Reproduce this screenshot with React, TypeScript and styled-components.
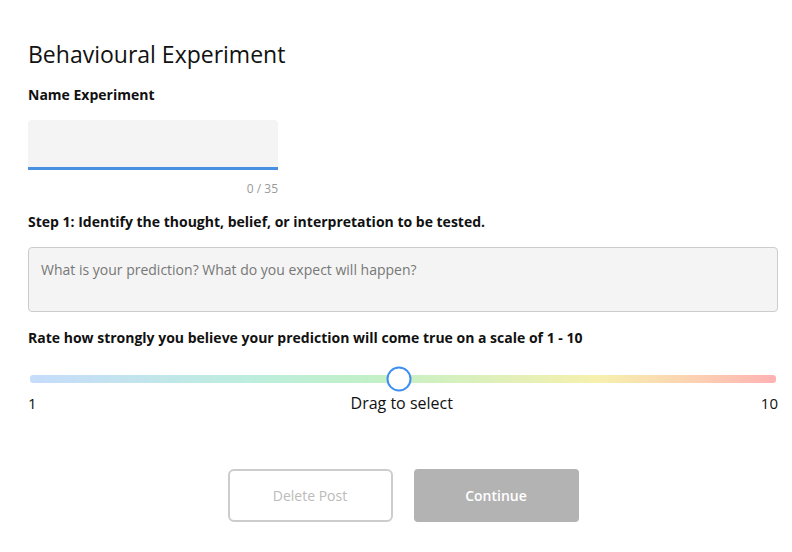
import React, { useState } from "react";
import styled, { createGlobalStyle } from "styled-components";

const GlobalStyle = createGlobalStyle`
    html, body {
        margin: 0;
        padding: 0;
        background: #ffffff;
    }
    body {
        font-family: "Open Sans", "Liberation Sans", sans-serif;
        color: #111111;
    }
    * {
        box-sizing: border-box;
    }
`;

function App() {
    const [name, setName] = useState("");
    const [percent] = useState(49.5);

    return (
        <>
            <GlobalStyle />
            <Page>
                <Title>Behavioural Experiment</Title>

                <Label>Name Experiment</Label>
                <NameField>
                    <NameInput value={name} maxLength={35} onChange={(e) => setName(e.target.value)} />
                    <Counter>{name.length} / 35</Counter>
                </NameField>

                <Label>Step 1: Identify the thought, belief, or interpretation to be tested.</Label>
                <Prediction placeholder="What is your prediction? What do you expect will happen?" />

                <Label>Rate how strongly you believe your prediction will come true on a scale of 1 - 10</Label>
                <Slider>
                    <Track>
                        <Thumb style={{ left: `${percent}%` }} />
                    </Track>
                </Slider>
                <Scale>
                    <span>1</span>
                    <Hint>Drag to select</Hint>
                    <span>10</span>
                </Scale>

                <Actions>
                    <GhostButton>Delete Post</GhostButton>
                    <SolidButton>Continue</SolidButton>
                </Actions>
            </Page>
        </>
    );
}

export default App;

const Page = styled.div`
    width: 750px;
    margin-left: 28px;
    padding-top: 38px;
    display: flex;
    flex-direction: column;
`;

const Title = styled.h1`
    margin: 0 0 15px;
    font-size: 23px;
    font-weight: 400;
    line-height: 32px;
    color: #111111;
`;

const Label = styled.div`
    font-size: 14px;
    font-weight: 700;
    line-height: 20px;
    color: #111111;
`;

const NameField = styled.div`
    width: 250px;
    margin: 15px 0 15px;
    display: flex;
    flex-direction: column;
`;

const NameInput = styled.input`
    height: 50px;
    border: none;
    border-bottom: 3px solid #4a90e2;
    border-radius: 4px 4px 0 0;
    background: #f4f4f4;
    padding: 0 12px;
    font-family: inherit;
    font-size: 14px;
    outline: none;
`;

const Counter = styled.div`
    margin-top: 10px;
    text-align: right;
    font-size: 12px;
    color: #999999;
`;

const Prediction = styled.textarea`
    height: 65px;
    margin: 15px 0 16px;
    padding: 12px 12px;
    border: 1px solid #cccccc;
    border-radius: 4px;
    background: #f4f4f4;
    font-family: inherit;
    font-size: 14px;
    color: #333333;
    resize: none;
    outline: none;
    &::placeholder {
        color: #777777;
    }
`;

const Slider = styled.div`
    margin: 27px 2px 0;
    height: 8px;
`;

const Track = styled.div`
    position: relative;
    height: 8px;
    border-radius: 3px;
    background: linear-gradient(to right, #c6dcfb 0%, #bdeedd 30%, #c1f0c8 45%, #f6f0ae 76%, #fbd4b2 88%, #ffb2b3 100%);
`;

const Thumb = styled.div`
    position: absolute;
    top: 50%;
    width: 25px;
    height: 25px;
    border-radius: 50%;
    border: 2px solid #3d8ef0;
    background: #ffffff;
    transform: translate(-50%, -50%);
`;

const Scale = styled.div`
    margin-top: 10px;
    display: flex;
    justify-content: space-between;
    align-items: baseline;
    font-size: 15px;
    line-height: 20px;
    color: #111111;
`;

const Hint = styled.span`
    font-size: 16px;
    padding-left: 6px;
`;

const Actions = styled.div`
    margin-top: 56px;
    display: flex;
    justify-content: center;
    gap: 21px;
`;

const ButtonBase = styled.button`
    width: 165px;
    height: 53px;
    font-family: inherit;
    font-size: 14px;
    cursor: pointer;
`;

const GhostButton = styled(ButtonBase)`
    background: #ffffff;
    border: 2px solid #cccccc;
    border-radius: 6px;
    color: #bbbbbb;
`;

const SolidButton = styled(ButtonBase)`
    background: #b3b3b3;
    border: none;
    border-radius: 4px;
    color: #ffffff;
    font-weight: 600;
`;
